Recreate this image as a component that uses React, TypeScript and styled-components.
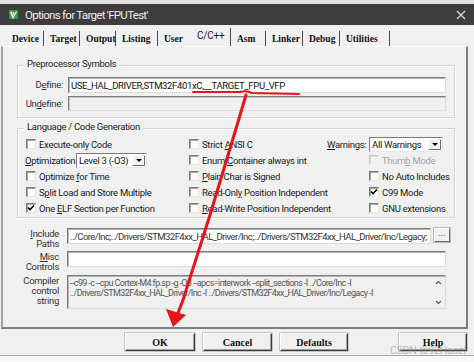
import React from "react";
import styled, { createGlobalStyle } from "styled-components";

const SANS = `Roboto, "Liberation Sans", Arial, sans-serif`;
const SERIF = `"Liberation Serif", "Times New Roman", serif`;

const GlobalStyle = createGlobalStyle`
  html, body { margin: 0; padding: 0; background: #f0f0f0; }
  body {
    width: 474px; height: 362px; overflow: hidden;
    font-family: ${SANS};
    font-size: 9.5px; letter-spacing: -0.3px; color: #000;
  }
  #root { width: 474px; height: 362px; }
`;

const Window = styled.div`
  position: relative;
  width: 474px;
  height: 362px;
  background: #f0f0f0;
  display: flex;
  flex-direction: column;
  overflow: hidden;
`;

const TopStrip = styled.div`
  height: 4px;
  flex: none;
  background: #e2e2e2;
`;

const TitleBar = styled.div`
  height: 21px;
  flex: none;
  background: #3d3d3d;
  display: flex;
  align-items: center;
  padding: 0 8px 0 9px;
  gap: 7px;
`;

const TitleText = styled.span`
  color: #ececec;
  font-size: 11.5px;
  letter-spacing: -0.7px;
`;

const CloseBtn = styled.span`
  margin-left: auto;
  display: flex;
`;

const TabStrip = styled.div`
  height: 21px;
  flex: none;
  display: flex;
  align-items: flex-end;
  padding-left: 6px;
`;

const Tab = styled.div<{ $w: number; $active?: boolean; $sep?: boolean }>`
  width: ${(p) => p.$w}px;
  height: ${(p) => (p.$active ? 18 : 15)}px;
  box-sizing: border-box;
  display: flex;
  align-items: ${(p) => (p.$active ? "flex-start" : "center")};
  padding-left: ${(p) => (p.$active ? 9 : 6)}px;
  padding-top: ${(p) => (p.$active ? 2 : 0)}px;
  font-family: ${(p) => (p.$active ? SANS : SERIF)};
  font-weight: ${(p) => (p.$active ? 400 : 700)};
  font-size: ${(p) => (p.$active ? 10 : 9.5)}px;
  letter-spacing: ${(p) => (p.$active ? -0.2 : 0)}px;
  line-height: 12px;
  color: #111;
  border-right: 1px solid ${(p) => (p.$sep ? "#4a4a4a" : "transparent")};
`;

const Panel = styled.div`
  margin-left: 1px;
  width: 467px;
  height: 283px;
  flex: none;
  box-sizing: border-box;
  border-left: 2px solid #a2a2a2;
  border-top: 1px solid #fdfdfd;
  border-right: 2px solid #7d7d7d;
  border-bottom: 2px solid #7d7d7d;
  display: flex;
  flex-direction: column;
`;

const GroupBox = styled.div<{ $h: number; $mt: number }>`
  position: relative;
  margin: ${(p) => p.$mt}px 0 0 14px;
  width: 438px;
  height: ${(p) => p.$h}px;
  flex: none;
  box-sizing: border-box;
  border: 1px solid #d3d3d3;
  box-shadow: inset 1px 1px #fff, 1px 1px #fff;
`;

const Legend = styled.span`
  position: absolute;
  top: -8px;
  left: 6px;
  padding: 0 3px;
  background: #f0f0f0;
  line-height: 12px;
  color: #222;
`;

const SymRows = styled.div`
  display: flex;
  flex-direction: column;
  gap: 3px;
  padding-top: 11px;
`;

const SymRow = styled.div`
  display: flex;
  align-items: center;
  gap: 5px;
`;

const RightLabel = styled.span<{ $w: number }>`
  width: ${(p) => p.$w}px;
  flex: none;
  text-align: right;
  line-height: 10px;
  color: #333;
`;

const TextBox = styled.div<{ $w: number; $h: number; $disabled?: boolean; $tight?: boolean }>`
  width: ${(p) => p.$w}px;
  height: ${(p) => p.$h}px;
  flex: none;
  box-sizing: border-box;
  background: ${(p) => (p.$disabled ? "#f0f0f0" : "#fff")};
  border: 1px solid;
  border-color: #7c7c7c #dcdcdc #dcdcdc #7c7c7c;
  box-shadow: inset 1px 1px ${(p) => (p.$disabled ? "#c8c8c8" : "#b4b4b4")};
  display: flex;
  align-items: center;
  padding-left: 2px;
  color: ${(p) => (p.$tight ? "#333" : "#111")};
  letter-spacing: ${(p) => (p.$tight ? -0.55 : -0.35)}px;
  white-space: nowrap;
  overflow: hidden;
`;

const Mn = styled.span`
  text-decoration: underline;
  text-underline-offset: 1px;
`;

const Columns = styled.div`
  display: flex;
  padding: 7px 0 0 7px;
`;

const Column = styled.div<{ $w: number }>`
  width: ${(p) => p.$w}px;
  flex: none;
  display: flex;
  flex-direction: column;
`;

const Row = styled.div<{ $indent?: number }>`
  height: 16px;
  display: flex;
  align-items: center;
  padding-left: ${(p) => p.$indent ?? 0}px;
  white-space: nowrap;
`;

const CheckRow = styled(Row)<{ $disabled?: boolean }>`
  gap: 3px;
  color: ${(p) => (p.$disabled ? "#a4a4a4" : "#1a1a1a")};
`;

const Box = styled.span<{ $disabled?: boolean }>`
  width: 10px;
  height: 10px;
  flex: none;
  box-sizing: border-box;
  background: ${(p) => (p.$disabled ? "#f0f0f0" : "#fff")};
  border: 1px solid;
  border-color: ${(p) =>
    p.$disabled ? "#c4c4c4 #f4f4f4 #f4f4f4 #c4c4c4" : "#7a7a7a #e4e4e4 #e4e4e4 #7a7a7a"};
  box-shadow: inset 1px 1px ${(p) => (p.$disabled ? "#dcdcdc" : "#a6a6a6")};
  display: flex;
  align-items: center;
  justify-content: center;
`;

const Combo = styled.div<{ $w: number }>`
  width: ${(p) => p.$w}px;
  height: 15px;
  box-sizing: border-box;
  background: #fff;
  border: 1px solid;
  border-color: #7a7a7a #e6e6e6 #e6e6e6 #7a7a7a;
  display: flex;
  align-items: center;
  padding-left: 2px;
  color: #111;
`;

const ComboText = styled.span`
  flex: 1;
  white-space: nowrap;
`;

const ComboBtn = styled.span`
  width: 13px;
  height: 11px;
  margin-right: 1px;
  box-sizing: border-box;
  background: #f0f0f0;
  border: 1px solid;
  border-color: #fff #6a6a6a #6a6a6a #fff;
  display: flex;
  align-items: center;
  justify-content: center;
  &::after {
    content: "";
    border-left: 3px solid transparent;
    border-right: 3px solid transparent;
    border-top: 3px solid #000;
  }
`;

const ComboLabel = styled.span<{ $w: number }>`
  width: ${(p) => p.$w}px;
  flex: none;
  color: #1a1a1a;
`;

const FieldRow = styled.div<{ $mt: number; $h: number }>`
  margin-top: ${(p) => p.$mt}px;
  height: ${(p) => p.$h}px;
  flex: none;
  display: flex;
  align-items: flex-start;
  gap: 8px;
`;

const MultiLabel = styled.div`
  width: 56px;
  flex: none;
  text-align: right;
  line-height: 10px;
  padding-top: 1px;
  color: #333;
`;

const SmallBtn = styled.span`
  width: 16px;
  height: 14px;
  margin-left: -5px;
  box-sizing: border-box;
  border: 1px solid;
  border-color: #fff #6a6a6a #6a6a6a #fff;
  box-shadow: 0 0 0 1px #b8b8b8;
  background: #f0f0f0;
  font-size: 9px;
  line-height: 8px;
  letter-spacing: 0;
  text-align: center;
  color: #333;
`;

const TextArea = styled.div`
  width: 379px;
  height: 34px;
  box-sizing: border-box;
  border: 1px solid;
  border-color: #7c7c7c #dcdcdc #dcdcdc #7c7c7c;
  box-shadow: inset 1px 1px #b4b4b4;
  background: #f0f0f0;
  display: flex;
`;

const AreaText = styled.div`
  flex: 1;
  padding: 2px 0 0 2px;
  font-size: 9px;
  letter-spacing: -0.6px;
  line-height: 10px;
  color: #555;
  white-space: nowrap;
  overflow: hidden;
`;

const ScrollCol = styled.div`
  width: 14px;
  display: flex;
  flex-direction: column;
  justify-content: space-between;
  align-items: center;
  padding: 4px 0 3px;
`;

const ButtonRow = styled.div`
  margin-top: 4px;
  height: 18px;
  flex: none;
  display: flex;
  gap: 8px;
  padding: 0 7px 0 125px;
`;

const DlgButton = styled.button<{ $w: number; $push?: boolean }>`
  width: ${(p) => p.$w}px;
  height: 18px;
  margin-left: ${(p) => (p.$push ? "auto" : "0")};
  padding: 0;
  box-sizing: border-box;
  background: #f0f0f0;
  border: 1px solid;
  border-color: #fff #3c3c3c #3c3c3c #fff;
  box-shadow: inset -1px -1px #a0a0a0, 0 0 0 0.5px #9a9a9a;
  font-family: ${SERIF};
  font-weight: 700;
  font-size: 10px;
  letter-spacing: 0;
  color: #111;
`;

const BottomEdge = styled.div`
  margin-top: 4px;
  flex: 1;
  border-top: 1px solid #a9a9a9;
  background: #f8f8f8;
`;

const Overlay = styled.svg`
  position: absolute;
  left: 0;
  top: 0;
  pointer-events: none;
`;

const Watermark = styled.span`
  position: absolute;
  left: 390px;
  top: 345px;
  font-size: 10.5px;
  line-height: 12px;
  letter-spacing: -0.2px;
  white-space: nowrap;
  color: rgba(140, 140, 140, 0.55);
`;

const Check = () => (
  <svg width="8" height="8" viewBox="0 0 8 8">
    <polyline points="1,3.5 3,5.5 7,1.5" fill="none" stroke="#000" strokeWidth="1.6" />
  </svg>
);

const Chevron = ({ up }: { up?: boolean }) => (
  <svg width="7" height="5" viewBox="0 0 7 5">
    <polyline
      points={up ? "1,4 3.5,1.5 6,4" : "1,1 3.5,3.5 6,1"}
      fill="none"
      stroke="#555"
      strokeWidth="1.1"
    />
  </svg>
);

const CB = ({
  children,
  checked,
  disabled,
  indent,
}: {
  children: React.ReactNode;
  checked?: boolean;
  disabled?: boolean;
  indent?: number;
}) => (
  <CheckRow $indent={indent ?? 1} $disabled={disabled}>
    <Box $disabled={disabled}>{checked && <Check />}</Box>
    <span>{children}</span>
  </CheckRow>
);

const tabs: { label: string; w: number; active?: boolean; sep?: boolean }[] = [
  { label: "Device", w: 38, sep: true },
  { label: "Target", w: 36, sep: true },
  { label: "Output", w: 36, sep: true },
  { label: "Listing", w: 42, sep: true },
  { label: "User", w: 30 },
  { label: "C/C++", w: 43, active: true, sep: true },
  { label: "Asm", w: 35, sep: true },
  { label: "Linker", w: 37, sep: true },
  { label: "Debug", w: 37, sep: true },
  { label: "Utilities", w: 50, sep: true },
];

export default function App() {
  return (
    <>
      <GlobalStyle />
      <Window>
        <TopStrip />
        <TitleBar>
          <svg width="9" height="9" viewBox="0 0 9 9">
            <rect width="9" height="9" fill="#2f9a3c" />
            <path d="M1.5 1.5 L4 7.5 L7.5 1.5" fill="none" stroke="#fff" strokeWidth="1.4" />
            <path d="M4.2 2 L4.2 4.5" stroke="#fff" strokeWidth="1.2" />
          </svg>
          <TitleText>Options for Target 'FPUTest'</TitleText>
          <CloseBtn>
            <svg width="10" height="10" viewBox="0 0 10 10">
              <path d="M1 1 L9 9 M9 1 L1 9" stroke="#d8d8d8" strokeWidth="1.3" />
            </svg>
          </CloseBtn>
        </TitleBar>

        <TabStrip>
          {tabs.map((t) => (
            <Tab key={t.label} $w={t.w} $active={t.active} $sep={t.sep}>
              {t.label}
            </Tab>
          ))}
        </TabStrip>

        <Panel>
          <GroupBox $mt={18} $h={53}>
            <Legend>Preprocessor Symbols</Legend>
            <SymRows>
              <SymRow>
                <RightLabel $w={45}>
                  D<Mn>e</Mn>fine:
                </RightLabel>
                <TextBox $w={378} $h={16}>
                  USE_HAL_DRIVER,STM32F401xC,__TARGET_FPU_VFP
                </TextBox>
              </SymRow>
              <SymRow>
                <RightLabel $w={45}>
                  Un<Mn>d</Mn>efine:
                </RightLabel>
                <TextBox $w={378} $h={15} $disabled />
              </SymRow>
            </SymRows>
          </GroupBox>

          <GroupBox $mt={10} $h={90}>
            <Legend>Language / Code Generation</Legend>
            <Columns>
              <Column $w={163}>
                <CB>Execute-only Code</CB>
                <Row>
                  <ComboLabel $w={51}>
                    <Mn>O</Mn>ptimization:
                  </ComboLabel>
                  <Combo $w={71}>
                    <ComboText>Level 3 (-O3)</ComboText>
                    <ComboBtn />
                  </Combo>
                </Row>
                <CB>
                  Optimize <Mn>f</Mn>or Time
                </CB>
                <CB>
                  S<Mn>p</Mn>lit Load and Store Multiple
                </CB>
                <CB checked>
                  One <Mn>E</Mn>LF Section per Function
                </CB>
              </Column>
              <Column $w={139}>
                <CB>
                  Strict <Mn>A</Mn>NSI C
                </CB>
                <CB>
                  Enum <Mn>C</Mn>ontainer always int
                </CB>
                <CB>
                  <Mn>P</Mn>lain Char is Signed
                </CB>
                <CB>
                  Read-Onl<Mn>y</Mn> Position Independent
                </CB>
                <CB>
                  <Mn>R</Mn>ead-Write Position Independent
                </CB>
              </Column>
              <Column $w={120}>
                <Row>
                  <ComboLabel $w={42}>
                    <Mn>W</Mn>arnings:
                  </ComboLabel>
                  <Combo $w={74}>
                    <ComboText>All Warnings</ComboText>
                    <ComboBtn />
                  </Combo>
                </Row>
                <CB indent={42} disabled>
                  Thum<Mn>b</Mn> Mode
                </CB>
                <CB indent={42}>No Auto Includes</CB>
                <CB indent={42} checked>
                  C99 Mode
                </CB>
                <CB indent={42}>GNU extensions</CB>
              </Column>
            </Columns>
          </GroupBox>

          <FieldRow $mt={10} $h={22}>
            <MultiLabel>
              <Mn>I</Mn>nclude
              <br />
              Paths
            </MultiLabel>
            <TextBox $w={364} $h={16} $tight>
              ../Core/Inc;../Drivers/STM32F4xx_HAL_Driver/Inc;../Drivers/STM32F4xx_HAL_Driver/Inc/Legacy;
            </TextBox>
            <SmallBtn>...</SmallBtn>
          </FieldRow>

          <FieldRow $mt={1} $h={23}>
            <MultiLabel>
              <Mn>M</Mn>isc
              <br />
              Controls
            </MultiLabel>
            <TextBox $w={379} $h={16} />
          </FieldRow>

          <FieldRow $mt={1} $h={34}>
            <MultiLabel>
              Compiler
              <br />
              control
              <br />
              string
            </MultiLabel>
            <TextArea>
              <AreaText>
                --c99 -c --cpu Cortex-M4.fp.sp -g -O3 --apcs=interwork --split_sections -I ../Core/Inc -I
                <br />
                ../Drivers/STM32F4xx_HAL_Driver/Inc -I ../Drivers/STM32F4xx_HAL_Driver/Inc/Legacy -I
              </AreaText>
              <ScrollCol>
                <Chevron up />
                <Chevron />
              </ScrollCol>
            </TextArea>
          </FieldRow>
        </Panel>

        <ButtonRow>
          <DlgButton $w={70}>OK</DlgButton>
          <DlgButton $w={69}>Cancel</DlgButton>
          <DlgButton $w={68}>Defaults</DlgButton>
          <DlgButton $w={68} $push>
            Help
          </DlgButton>
        </ButtonRow>
        <BottomEdge />

        <Watermark>CSDN @92Haozi</Watermark>

        <Overlay width="474" height="362" viewBox="0 0 474 362">
          <path
            d="M193 92 L240 92 Q246 90 252 93 L299 94"
            fill="none"
            stroke="#e8141a"
            strokeWidth="2"
            strokeLinecap="round"
          />
          <path
            d="M246 95 L238 122 L210 215 L183 300 L178 313"
            fill="none"
            stroke="#e8141a"
            strokeWidth="3"
            strokeLinecap="round"
          />
          <polygon points="173,327 166,309 186,315" fill="#e8141a" />
        </Overlay>
      </Window>
    </>
  );
}
